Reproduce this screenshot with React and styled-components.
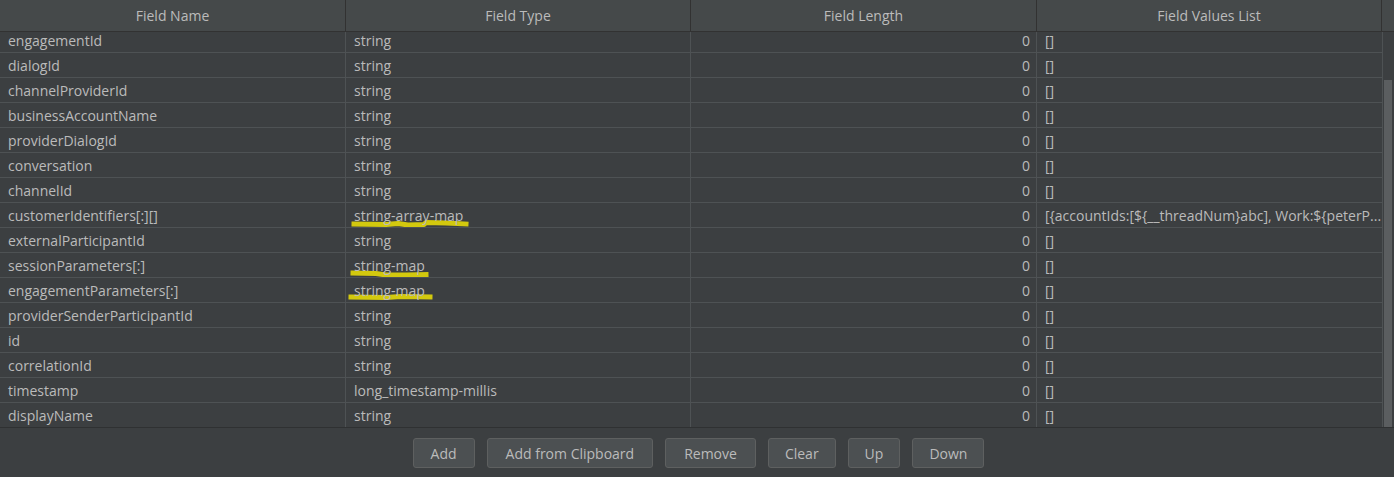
import React, { useLayoutEffect, useRef } from "react";
import styled, { createGlobalStyle } from "styled-components";

const Global = createGlobalStyle`
  html, body { margin: 0; padding: 0; background: #3c3f41; }
  body { font-family: "Open Sans", "Noto Sans", sans-serif; }
  * { box-sizing: border-box; }
`;

const Page = styled.div`
  width: 1394px;
  height: 477px;
  display: flex;
  flex-direction: column;
  background: #3c3f41;
  color: #bbbbbb;
  font-size: 14px;
  overflow: hidden;
`;

const Header = styled.div`
  display: grid;
  grid-template-columns: 346px 345px 346px 345px 1fr;
  height: 32px;
  background: #45494a;
  border-bottom: 1px solid #323232;
  flex: none;
`;

const HeadCell = styled.div`
  display: flex;
  align-items: center;
  justify-content: center;
  border-right: ${(p) => (p.$last ? "none" : "1px solid #323232")};
  color: #bbbbbb;
  padding-top: 1px;
  line-height: 18px;
`;

const Body = styled.div`
  display: flex;
  height: 396px;
  flex: none;
  border-bottom: 1px solid #2f3132;
`;

const Viewport = styled.div`
  width: 1383px;
  height: 100%;
  overflow: hidden;
  border-right: 1px solid #4e5254;
`;

const Row = styled.div`
  display: grid;
  grid-template-columns: 346px 345px 346px 1fr;
  height: 25px;
  border-bottom: 1px solid #4e5254;
`;

const Cell = styled.div`
  position: relative;
  display: flex;
  align-items: center;
  justify-content: ${(p) => (p.$right ? "flex-end" : "flex-start")};
  padding: ${(p) => (p.$right ? "1px 6px 0 0" : "1px 0 0 8px")};
  border-right: ${(p) => (p.$last ? "none" : "1px solid #4e5254")};
  white-space: nowrap;
  overflow: hidden;
  line-height: 17px;
`;

const TypeText = styled.span`
  position: relative;
`;

const Track = styled.div`
  flex: 1;
  display: flex;
  flex-direction: column;
  justify-content: flex-end;
  padding: 0 2px 0 1px;
  background: #3c3f41;
`;

const Thumb = styled.div`
  height: 347px;
  background: #5b5e60;
`;

const Marker = styled.svg`
  position: absolute;
  left: 0;
  top: 0;
  pointer-events: none;
  overflow: visible;
`;

const Footer = styled.div`
  flex: 1;
  display: flex;
  justify-content: center;
  align-items: flex-start;
  gap: 12px;
  padding-top: 10px;
  padding-left: 3px;
`;

const Button = styled.button`
  height: 30px;
  padding: 0 ${(p) => p.$pad || 18}px;
  background: #4c5052;
  border: 1px solid #5e6060;
  border-radius: 3px;
  color: #bbbbbb;
  font-family: inherit;
  font-size: 14px;
  cursor: pointer;
`;

const rows = [
  ["engagementId", "string", "0", "[]"],
  ["dialogId", "string", "0", "[]"],
  ["channelProviderId", "string", "0", "[]"],
  ["businessAccountName", "string", "0", "[]"],
  ["providerDialogId", "string", "0", "[]"],
  ["conversation", "string", "0", "[]"],
  ["channelId", "string", "0", "[]"],
  ["customerIdentifiers[:][]", "string-array-map", "0", "[{accountIds:[${__threadNum}abc], Work:${peterP...", "a"],
  ["externalParticipantId", "string", "0", "[]"],
  ["sessionParameters[:]", "string-map", "0", "[]", "b"],
  ["engagementParameters[:]", "string-map", "0", "[]", "c"],
  ["providerSenderParticipantId", "string", "0", "[]"],
  ["id", "string", "0", "[]"],
  ["correlationId", "string", "0", "[]"],
  ["timestamp", "long_timestamp-millis", "0", "[]"],
  ["displayName", "string", "0", "[]"],
];

const marks = {
  a: "M8 21 L40 21.5 L52 20.5 L62 22 L78 21.5 L80 19.5 L100 20 L120 21",
  b: "M7 20 L30 20.5 L40 22 L60 22 L80 21.5",
  c: "M5 19 L40 19.5 L55 18.5 L84 19",
};

const Highlight = ({ k }) => (
  <Marker width="140" height="25">
    <path d={marks[k]} stroke="#d3c90e" strokeWidth="5" fill="none" strokeLinecap="square" strokeLinejoin="round" />
  </Marker>
);

export default function App() {
  const vp = useRef(null);
  useLayoutEffect(() => {
    if (vp.current) vp.current.scrollTop = 4;
  }, []);
  return (
    <Page>
      <Global />
      <Header>
        <HeadCell>Field Name</HeadCell>
        <HeadCell>Field Type</HeadCell>
        <HeadCell>Field Length</HeadCell>
        <HeadCell>Field Values List</HeadCell>
        <HeadCell $last />
      </Header>
      <Body>
        <Viewport ref={vp}>
          {rows.map(([name, type, len, vals, mk]) => (
            <Row key={name}>
              <Cell>{name}</Cell>
              <Cell>
                {mk && <Highlight k={mk} />}
                <TypeText>{type}</TypeText>
              </Cell>
              <Cell $right>{len}</Cell>
              <Cell $last>{vals}</Cell>
            </Row>
          ))}
        </Viewport>
        <Track>
          <Thumb />
        </Track>
      </Body>
      <Footer>
        <Button $pad={17}>Add</Button>
        <Button>Add from Clipboard</Button>
        <Button>Remove</Button>
        <Button $pad={16}>Clear</Button>
        <Button $pad={16}>Up</Button>
        <Button $pad={16}>Down</Button>
      </Footer>
    </Page>
  );
}
